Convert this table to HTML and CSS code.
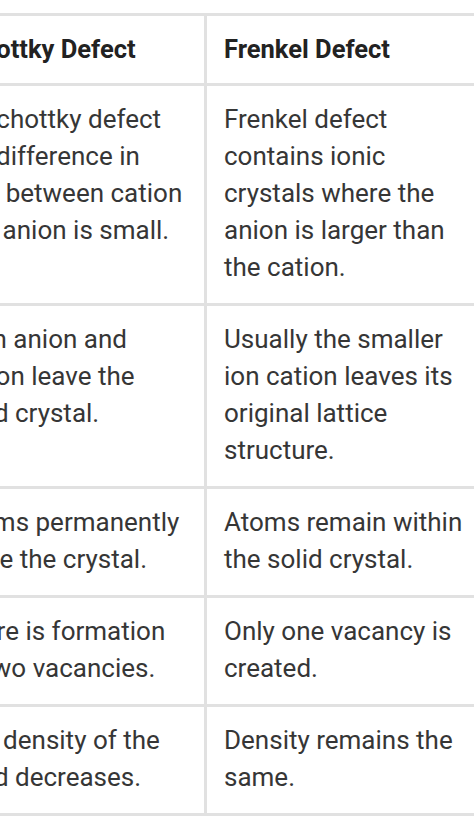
FILE: index.html
```html
<!DOCTYPE html>
<html lang="en">
<head>
<meta charset="utf-8">
<title>Schottky vs Frenkel Defect</title>
<link rel="stylesheet" href="styles.css">
</head>
<body>
<div class="table">
  <div class="cell head left">Schottky Defect</div>
  <div class="cell head right">Frenkel Defect</div>

  <div class="cell left">In Schottky defect the difference in size between cation and anion is small.</div>
  <div class="cell right">Frenkel defect contains ionic crystals where the anion is larger than the cation.</div>

  <div class="cell left">Both anion and cation leave the solid crystal.</div>
  <div class="cell right">Usually the smaller ion cation leaves its original lattice structure.</div>

  <div class="cell left">Atoms permanently leave the crystal.</div>
  <div class="cell right">Atoms remain within the solid crystal.</div>

  <div class="cell left">There is formation of two vacancies.</div>
  <div class="cell right">Only one vacancy is created.</div>

  <div class="cell left">The density of the solid decreases.</div>
  <div class="cell right">Density remains the same.</div>
</div>
</body>
</html>
```
FILE: styles.css
```css
html, body {
  margin: 0;
  padding: 0;
  background: #ffffff;
  overflow: hidden;
  width: 474px;
  height: 822px;
}

body {
  font-family: Roboto, "Liberation Sans", Arial, sans-serif;
  color: #363636;
}

.table {
  display: grid;
  grid-template-columns: 268px 285px;
  gap: 3px;
  padding: 3px;
  background: #e1e1e1;
  margin: 13px 0 0 -67px;
  width: max-content;
}

.cell {
  background: #ffffff;
  font-size: 26px;
  line-height: 37px;
  padding: 15px 0 17px 17px;
  box-sizing: border-box;
}

.cell.left {
  padding-right: 20px;
}

.cell.right {
  padding-right: 23px;
}

.cell.head {
  font-size: 25.5px;
  font-weight: 700;
  color: #222222;
  padding-top: 15px;
  padding-bottom: 15px;
}
```
